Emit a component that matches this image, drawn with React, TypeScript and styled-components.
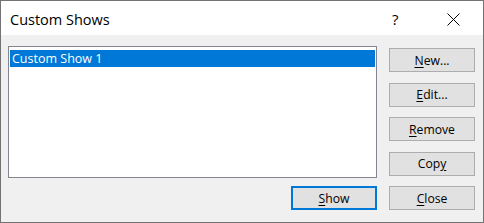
import React from "react";
import styled, { createGlobalStyle } from "styled-components";

const Global = createGlobalStyle`
  html, body { margin: 0; padding: 0; background: #ffffff; }
  * { box-sizing: border-box; }
`;

const Window = styled.div`
  width: 484px;
  height: 223px;
  border: 1px solid #737373;
  display: flex;
  flex-direction: column;
  font-family: "Open Sans", "Noto Sans", sans-serif;
  color: #000;
`;

const TitleBar = styled.div`
  height: 34px;
  background: #ffffff;
  display: flex;
  align-items: center;
  padding-left: 9px;
  flex-shrink: 0;
`;

const Title = styled.div`
  font-size: 14.5px;
  flex: 1;
  padding-top: 2px;
`;

const HelpGlyph = styled.div`
  font-size: 15px;
  width: 12px;
  margin-right: 43px;
  padding-top: 2px;
`;

const CloseGlyph = styled.svg`
  width: 13px;
  height: 13px;
  margin-right: 23px;
  margin-top: 3px;
`;

const Body = styled.div`
  flex: 1;
  background: #f0f0f0;
  display: grid;
  grid-template-columns: 369px 86px;
  column-gap: 12px;
  padding: 11px 7px 0 7px;
`;

const LeftCol = styled.div`
  display: flex;
  flex-direction: column;
  align-items: flex-end;
`;

const List = styled.div`
  width: 100%;
  height: 132px;
  background: #ffffff;
  border: 1px solid #82878f;
  padding: 3px 1px 0 1px;
`;

const ListItem = styled.div<{ $selected?: boolean }>`
  height: 17px;
  line-height: 17px;
  font-size: 12.5px;
  padding-left: 2px;
  background: ${(p) => (p.$selected ? "#0078d7" : "transparent")};
  color: ${(p) => (p.$selected ? "#ffffff" : "#000")};
`;

const RightCol = styled.div`
  display: flex;
  flex-direction: column;
  gap: 10.5px;
  padding-top: 2px;
`;

const Button = styled.div<{ $default?: boolean }>`
  width: 86px;
  height: 24px;
  background: #e1e1e1;
  border: ${(p) => (p.$default ? "2px solid #0078d7" : "1px solid #adadad")};
  display: flex;
  align-items: center;
  justify-content: center;
  font-size: 12.2px;
  color: #000;
`;

const ShowButton = styled(Button)`
  margin-top: 8px;
`;

const U = styled.span`
  text-decoration: underline;
  text-underline-offset: 2px;
`;

export default function App() {
  return (
    <>
      <Global />
      <Window>
        <TitleBar>
          <Title>Custom Shows</Title>
          <HelpGlyph>?</HelpGlyph>
          <CloseGlyph viewBox="0 0 13 13">
            <path d="M0.5 0.5 L12.5 12.5 M12.5 0.5 L0.5 12.5" stroke="#000" strokeWidth="1" fill="none" />
          </CloseGlyph>
        </TitleBar>
        <Body>
          <LeftCol>
            <List>
              <ListItem $selected>Custom Show 1</ListItem>
            </List>
            <ShowButton $default>
              <span><U>S</U>how</span>
            </ShowButton>
          </LeftCol>
          <RightCol>
            <Button><span><U>N</U>ew...</span></Button>
            <Button><span><U>E</U>dit...</span></Button>
            <Button><span><U>R</U>emove</span></Button>
            <Button><span>Cop<U>y</U></span></Button>
            <Button><span><U>C</U>lose</span></Button>
          </RightCol>
        </Body>
      </Window>
    </>
  );
}
